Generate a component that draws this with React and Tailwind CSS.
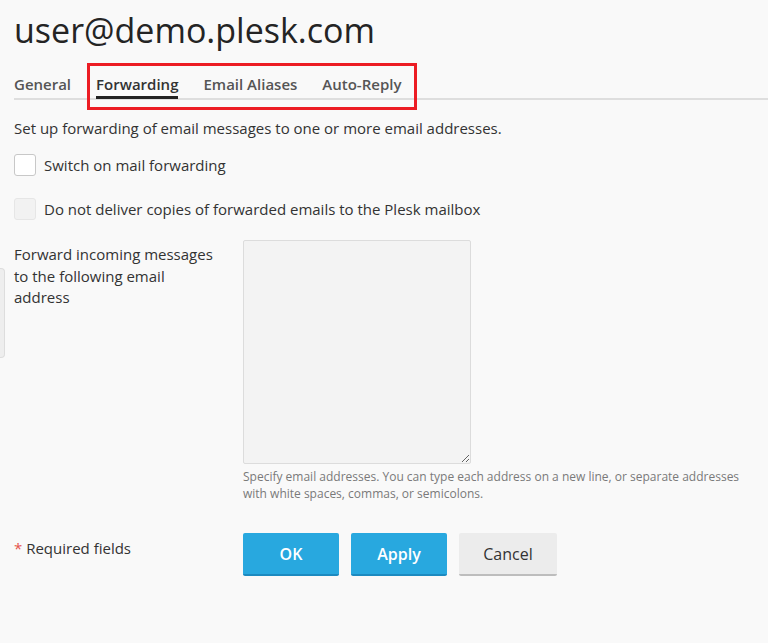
export default function App() {
  const tabs = ["General", "Forwarding", "Email Aliases", "Auto-Reply"];

  return (
    <div
      className="relative w-[768px] h-[643px] overflow-hidden bg-[#f9f9f9] text-[#333]"
      style={{ fontFamily: '"Open Sans", "Liberation Sans", sans-serif' }}
    >
      {/* side handle */}
      <div className="absolute left-0 top-[268px] w-[5px] h-[90px] bg-[#eee] border border-l-0 border-[#ddd] rounded-r-sm"></div>

      <div className="px-[14px] pt-[7px]">
        <h1 className="text-[34px] leading-[46px] text-[#242424] font-normal">user@demo.plesk.com</h1>

        {/* TABS */}
        <div className="mt-[11px] flex gap-[25px] border-b-2 border-[#dedede] w-[800px]">
          {tabs.map((t) => (
            <div
              key={t}
              className={
                t === "Forwarding"
                  ? "pt-[10px] pb-[2px] text-[15px] leading-5 font-semibold text-[#333] border-b-[3px] border-[#222] -mb-[1px]"
                  : "pt-[10px] pb-[2px] text-[15px] leading-5 font-semibold text-[#555] border-b-[3px] border-transparent -mb-[1px]"
              }
            >
              {t}
            </div>
          ))}
        </div>

        <p className="mt-[18px] text-[15px] leading-5">
          Set up forwarding of email messages to one or more email addresses.
        </p>

        <label className="mt-[16px] flex items-center gap-[8px] text-[15px]">
          <span className="w-[22px] h-[22px] bg-white border border-[#c8c8c8] rounded-[3px]"></span>
          Switch on mail forwarding
        </label>

        <label className="mt-[21px] flex items-center gap-[8px] text-[15px]">
          <span className="w-[22px] h-[22px] bg-[#f2f2f2] border border-[#e6e6e6] rounded-[3px]"></span>
          Do not deliver copies of forwarded emails to the Plesk mailbox
        </label>

        {/* FORM ROW */}
        <div className="mt-[20px] flex">
          <div className="w-[229px] shrink-0 pt-[4px] pr-6 text-[15px] leading-[21.5px]">
            Forward incoming messages to the following email address
          </div>
          <div>
            <textarea className="block w-[228px] h-[224px] bg-[#f3f3f3] border border-[#dcdcdc] rounded-[2px] resize-y"></textarea>
            <p className="mt-[4px] w-[512px] text-[12px] leading-[17px] text-[#7a7a7a]">
              Specify email addresses. You can type each address on a new line, or separate addresses with white spaces, commas, or semicolons.
            </p>
          </div>
        </div>

        {/* ACTIONS */}
        <div className="mt-[31px] flex">
          <div className="w-[229px] shrink-0 pt-[5px] text-[15px] leading-5">
            <span className="text-[#e5534b]">*</span> Required fields
          </div>
          <div className="flex gap-[12px]">
            <button className="w-[96px] h-[43px] bg-[#28a8df] border-b-2 border-[#1c8ac0] rounded-[2px] text-white text-[16px] font-semibold">
              OK
            </button>
            <button className="w-[96px] h-[43px] bg-[#28a8df] border-b-2 border-[#1c8ac0] rounded-[2px] text-white text-[16px] font-semibold">
              Apply
            </button>
            <button className="w-[98px] h-[43px] bg-[#ececec] border-b-2 border-[#bdbdbd] rounded-[2px] text-[#333] text-[16px]">
              Cancel
            </button>
          </div>
        </div>
      </div>

      {/* highlight box */}
      <div className="absolute left-[87px] top-[63px] w-[330px] h-[47px] border-[3px] border-[#ec1c24]"></div>
    </div>
  );
}
